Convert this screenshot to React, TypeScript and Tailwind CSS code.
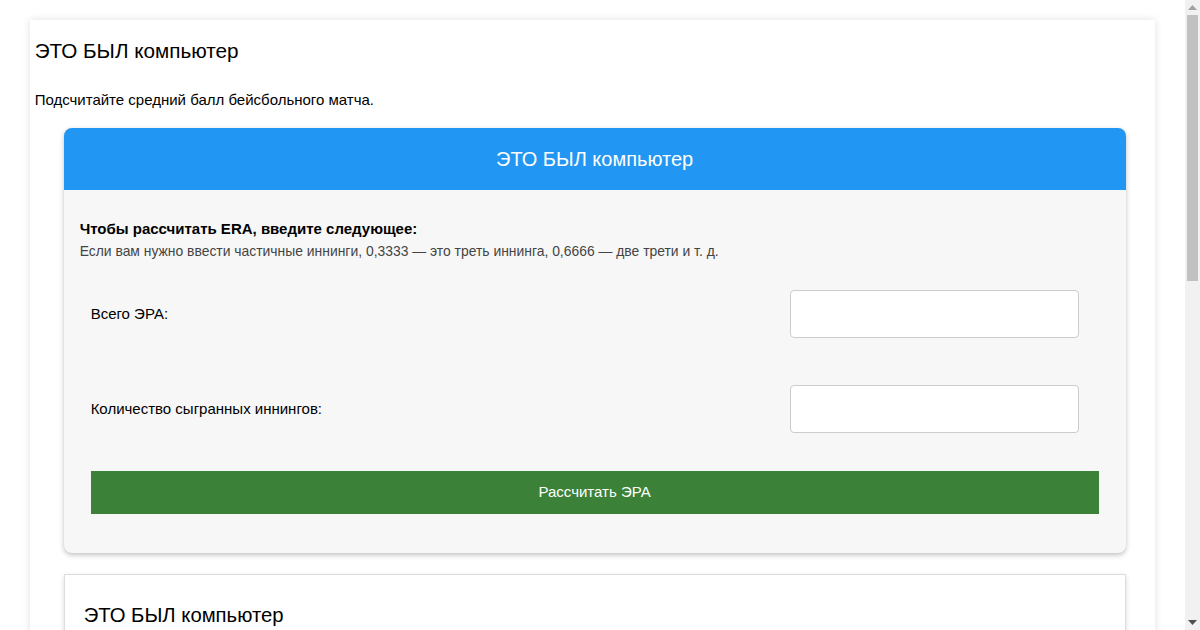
export default function App() {
  return (
    <div className="flex h-screen overflow-hidden bg-white font-['Liberation_Sans',Arial,sans-serif] text-black">
      <main className="min-w-0 flex-1">
        <div className="mx-auto mt-5 w-[95%] bg-white p-[5px] shadow-[0_0_8px_rgba(0,0,0,0.12)]">
          <h1 className="mt-[14px] text-[20.7px] leading-6">ЭТО БЫЛ компьютер</h1>
          <p className="mt-[28px] text-[15px] leading-[18px]">
            Подсчитайте средний балл бейсбольного матча.
          </p>

          <div className="ml-[29px] mt-[19px] w-[1062px] rounded-lg bg-[#f7f7f7] shadow-[0_2px_5px_rgba(0,0,0,0.25)]">
            <div className="flex h-[62px] items-center justify-center rounded-t-lg bg-[#2196F3] text-[20px] text-white">
              ЭТО БЫЛ компьютер
            </div>
            <div className="px-4 pb-[39px] pt-[30px]">
              <p className="text-[15px] font-bold leading-[18px]">
                Чтобы рассчитать ERA, введите следующее:
              </p>
              <p className="mt-[5px] text-[13.9px] leading-[17px] text-[#444]">
                Если вам нужно ввести частичные иннинги, 0,3333 — это треть иннинга, 0,6666 — две трети и т. д.
              </p>

              <div className="ml-[11px] mt-[30px] w-[1008px]">
                <div className="flex items-center justify-between">
                  <label className="text-[15px]">Всего ЭРА:</label>
                  <input className="mr-5 h-12 w-[289px] rounded border border-[#ccc] bg-white" />
                </div>
                <div className="mt-[47px] flex items-center justify-between">
                  <label className="text-[15px]">Количество сыгранных иннингов:</label>
                  <input className="mr-5 h-12 w-[289px] rounded border border-[#ccc] bg-white" />
                </div>
                <button className="mt-[38px] flex h-[43px] w-full items-center justify-center bg-[#3b8238] text-[15px] text-white">
                  Рассчитать ЭРА
                </button>
              </div>
            </div>
          </div>

          <div className="ml-[29px] mt-[21px] w-[1062px] border border-[#ddd] bg-white px-[19px] pb-10 pt-[28px] shadow-[0_2px_5px_rgba(0,0,0,0.15)]">
            <h2 className="text-[20.3px] leading-6">ЭТО БЫЛ компьютер</h2>
            <div className="h-[600px]" />
          </div>
        </div>
      </main>

      {/* page scrollbar */}
      <div className="flex w-[15px] shrink-0 flex-col items-center bg-[#f1f1f1]">
        <div className="flex h-[15px] items-center justify-center">
          <svg width="9" height="5" viewBox="0 0 9 5">
            <path d="M4.5 0 L9 5 L0 5 Z" fill="#a3a3a3" />
          </svg>
        </div>
        <div className="h-[266px] w-[11px] bg-[#c1c1c1]" />
        <div className="flex-1" />
        <div className="flex h-[15px] items-center justify-center">
          <svg width="9" height="5" viewBox="0 0 9 5">
            <path d="M0 0 L9 0 L4.5 5 Z" fill="#505050" />
          </svg>
        </div>
      </div>
    </div>
  );
}
